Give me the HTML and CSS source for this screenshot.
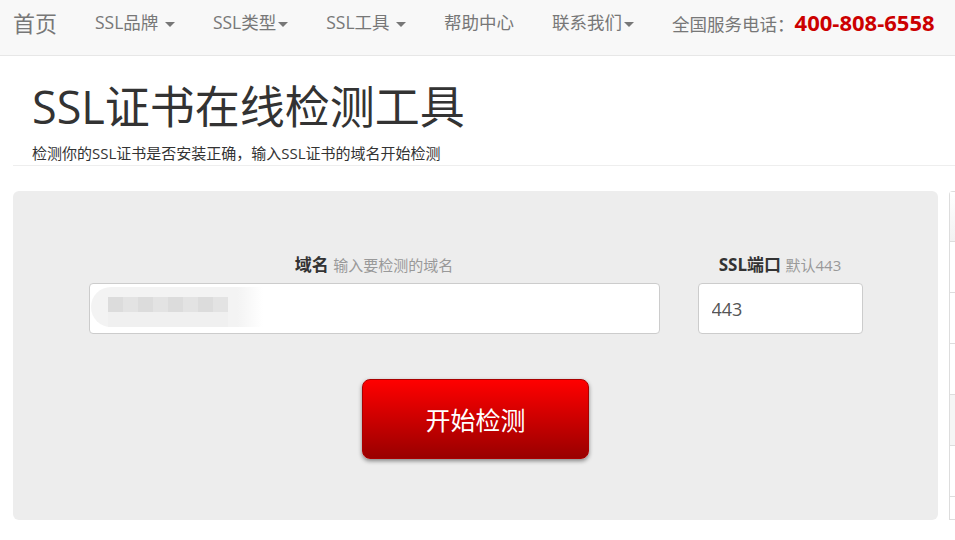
FILE: index.html
```html
<!DOCTYPE html>
<html lang="zh-CN">
<head>
  <meta charset="UTF-8" />
  <meta name="viewport" content="width=device-width, initial-scale=1.0"/>
  <title>SSL证书在线检测工具</title>
  <link rel="stylesheet" href="styles.css">
</head>
<body>

  <nav class="navbar">
    <a class="brand" href="#">首页</a>
    <a class="nav-link" href="#">SSL品牌 <span class="caret"></span></a>
    <a class="nav-link" href="#">SSL类型<span class="caret"></span></a>
    <a class="nav-link" href="#">SSL工具 <span class="caret"></span></a>
    <a class="nav-link" href="#">帮助中心</a>
    <a class="nav-link" href="#">联系我们<span class="caret"></span></a>
    <span class="nav-phone">全国服务电话：<b>400-808-6558</b></span>
  </nav>

  <header class="page-header">
    <h1>SSL证书在线检测工具</h1>
    <p>检测你的SSL证书是否安装正确，输入SSL证书的域名开始检测</p>
  </header>

  <div class="content">
    <div class="check-panel">
      <form class="check-form" onsubmit="return false">
        <div class="field">
          <label>域名 <small>输入要检测的域名</small></label>
          <div class="input-wrap">
            <input class="form-control" type="text" value="">
            <!-- blurred domain value -->
            <span class="blur-mark"></span>
          </div>
        </div>
        <div class="field">
          <label>SSL端口 <small>默认443</small></label>
          <input class="form-control" type="text" value="443">
        </div>
      </form>
      <button class="btn-check" type="button">开始检测</button>
    </div>

    <aside class="side-panel">
      <div class="side-head"></div>
      <div class="side-row"></div>
      <div class="side-row"></div>
      <div class="side-row"></div>
      <div class="side-row alt"></div>
      <div class="side-row"></div>
    </aside>
  </div>

</body>
</html>
```

FILE: styles.css
```css
* {
  box-sizing: border-box;
}

body {
  margin: 0;
  padding: 0;
  font-family: "Open Sans", "Noto Sans CJK SC", sans-serif;
  color: #333;
  background: #fff;
  overflow: hidden;
}

a {
  text-decoration: none;
}

/* Navbar */
.navbar {
  display: flex;
  align-items: center;
  gap: 38px;
  height: 56px;
  padding: 0 0 12px 13px;
  background: #f8f8f8;
  border-bottom: 1px solid #e7e7e7;
  white-space: nowrap;
}

.navbar .brand {
  font-size: 22px;
  color: #777;
}

.navbar .nav-link {
  font-size: 17.5px;
  color: #777;
}

.caret {
  display: inline-block;
  width: 0;
  height: 0;
  margin-left: 2px;
  vertical-align: middle;
  border-top: 5px solid #777;
  border-left: 5px solid transparent;
  border-right: 5px solid transparent;
}

.nav-phone {
  font-size: 17.5px;
  color: #777;
}

.nav-phone b {
  font-size: 22px;
  color: #c00;
}

/* Header */
.page-header {
  margin: 0 0 25px 13px;
  padding: 24px 0 2px 19px;
  border-bottom: 1px solid #eee;
}

.page-header h1 {
  margin: 0;
  font-size: 45px;
  font-weight: 400;
  line-height: 1.2;
  color: #333;
}

.page-header p {
  margin: 8px 0 0;
  font-size: 15px;
  color: #333;
}

/* Main */
.content {
  display: flex;
  gap: 11px;
  padding-left: 13px;
}

.check-panel {
  flex-shrink: 0;
  width: 925px;
  padding: 60px 0 61px;
  background: #ededed;
  border-radius: 6px;
  text-align: center;
}

.check-form {
  display: grid;
  grid-template-columns: 571px 165px;
  column-gap: 38px;
  justify-content: center;
}

.field label {
  display: block;
  margin-bottom: 7px;
  font-size: 17px;
  font-weight: 700;
  color: #333;
}

.field label small {
  font-size: 15px;
  font-weight: 400;
  color: #999;
}

.input-wrap {
  position: relative;
}

.form-control {
  display: block;
  width: 100%;
  height: 51px;
  padding: 0 13px;
  font-family: "Open Sans", "Noto Sans CJK SC", sans-serif;
  font-size: 18px;
  color: #555;
  background: #fff;
  border: 1px solid #ccc;
  border-radius: 4px;
}

.blur-mark {
  position: absolute;
  top: 4px;
  left: 2px;
  width: 172px;
  height: 40px;
  border-radius: 20px 0 0 20px;
  background: linear-gradient(90deg, #f3f3f3 0, #f3f3f3 85%, #fff 100%);
}

.blur-mark::before {
  content: "";
  position: absolute;
  top: 10px;
  left: 17px;
  width: 120px;
  height: 15px;
  background: repeating-linear-gradient(90deg, #dcdcdc 0, #dcdcdc 15px, #e3e3e3 15px, #e3e3e3 30px);
}

.blur-mark::after {
  content: "";
  position: absolute;
  top: 25px;
  left: 17px;
  width: 120px;
  height: 15px;
  background: #f0f0f0;
}

.btn-check {
  display: block;
  width: 227px;
  height: 80px;
  margin: 45px auto 0;
  font-family: "Open Sans", "Noto Sans CJK SC", sans-serif;
  font-size: 25px;
  color: #fff;
  background: linear-gradient(#ff0000, #990000);
  border: 1px solid #a00;
  border-radius: 8px;
  box-shadow: 0 2px 4px rgba(0, 0, 0, 0.45);
  cursor: pointer;
}

/* Side panel */
.side-panel {
  flex: 1;
  border: 1px solid #ddd;
  border-right: none;
  border-radius: 4px 0 0 0;
}

.side-head {
  height: 50px;
  background: linear-gradient(#fff, #f2f2f2);
  border-bottom: 1px solid #ddd;
}

.side-row {
  height: 51px;
  border-bottom: 1px solid #ddd;
}

.side-row.alt {
  background: #f5f5f5;
}
```
